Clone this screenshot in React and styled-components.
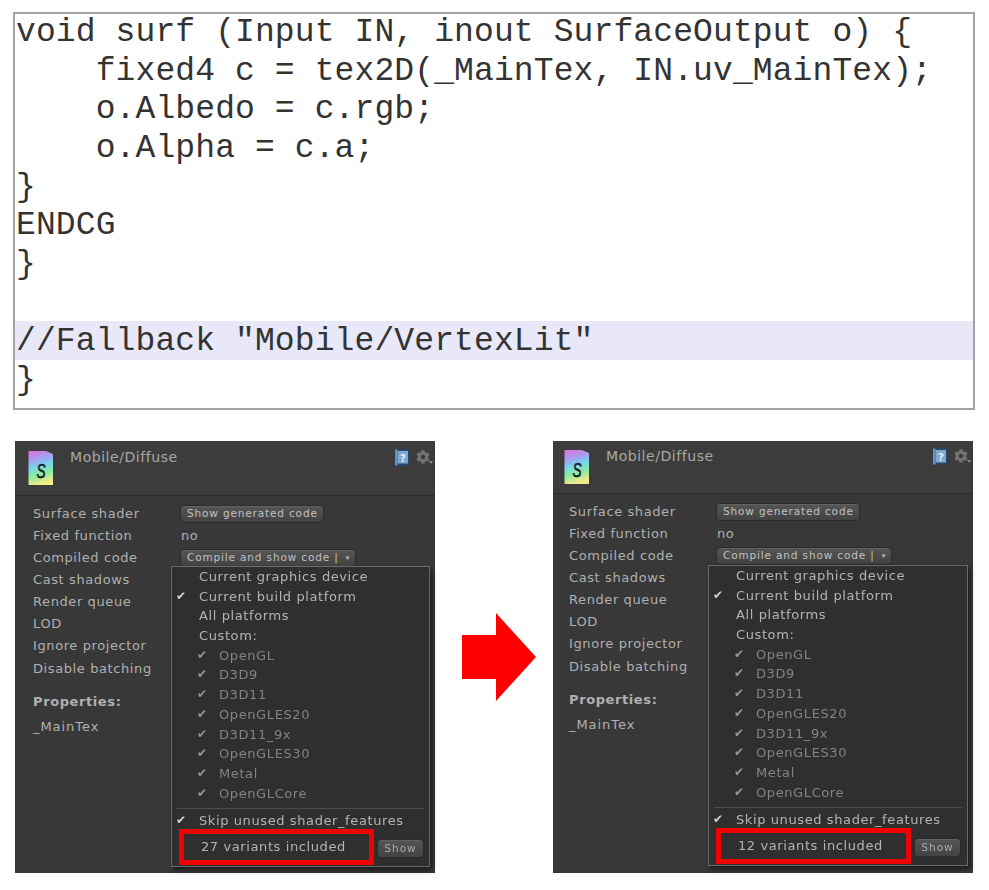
import styled, { createGlobalStyle } from 'styled-components';
import { FaCog } from 'react-icons/fa';

const GlobalStyle = createGlobalStyle`
    html, body {
        margin: 0;
        padding: 0;
        background: #fff;
    }
`;

const Page = styled.div`
    width: 989px;
    height: 890px;
    overflow: hidden;
    padding-top: 12px;
    box-sizing: border-box;
`;

const CodeBox = styled.div`
    width: 962px;
    height: 398px;
    margin-left: 13px;
    box-sizing: border-box;
    border: 2px solid #a3a3a3;
    overflow: hidden;
`;

const CodeLines = styled.div`
    margin-top: -2px;
    font-family: "Liberation Mono", monospace;
    font-size: 33px;
    letter-spacing: 0.11px;
    line-height: 38.65px;
    color: #333;
`;

const CodeLine = styled.div`
    box-sizing: border-box;
    height: 38.65px;
    padding: 2px 0 0 1px;
    white-space: pre;
    background: ${p => (p.$highlight ? '#e8e8f8' : 'transparent')};
`;

const Compare = styled.div`
    display: flex;
    align-items: flex-start;
    margin: 31px 0 0 15px;
`;

const ArrowWrap = styled.svg`
    flex: none;
    width: 74px;
    height: 88px;
    margin: 172px 17px 0 27px;
`;

const Panel = styled.div`
    position: relative;
    flex: none;
    width: 420px;
    height: 432px;
    background: #383838;
    font-family: "DejaVu Sans", sans-serif;
    color: #b0b0b0;
    filter: blur(0.35px);
`;

const Header = styled.div`
    display: flex;
    align-items: flex-start;
    box-sizing: border-box;
    height: ${p => (p.$compact ? 53 : 55)}px;
    padding: ${p => (p.$compact ? '8px 2px 0 11px' : '9px 2px 0 13px')};
    background: #3c3c3c;
    border-bottom: 1px solid #2b2b2b;
`;

const Title = styled.div`
    flex: 1;
    margin: -1px 0 0 16px;
    font-size: 14px;
    line-height: 16px;
    letter-spacing: 0.55px;
    color: #a8a8a8;
`;

const HeaderIcons = styled.div`
    display: flex;
    align-items: flex-start;
    gap: 6px;
    margin: -1px 0 0 0;
`;

const GearWrap = styled.div`
    display: flex;
    align-items: flex-end;
    width: 17px;
    height: 14px;
    margin-top: 1px;
    color: #727272;
`;

const GearCaret = styled.span`
    width: 0;
    height: 0;
    margin-left: -1px;
    border-left: 2px solid transparent;
    border-right: 2px solid transparent;
    border-top: 3px solid #8a8a8a;
`;

const Body = styled.div`
    padding: 6px 0 0 ${p => (p.$compact ? 16 : 18)}px;
`;

const Row = styled.div`
    display: flex;
    align-items: center;
    height: 22.15px;
    font-size: 13px;
    letter-spacing: 0.6px;
    white-space: nowrap;
`;

const RowLabel = styled.div`
    width: 147px;
    flex: none;
`;

const RowValue = styled.div`
    padding-left: 1px;
`;

const SectionLabel = styled(Row)`
    margin-top: 11px;
    font-weight: 700;
`;

const PropertyRow = styled(Row)`
    margin-top: 3px;
    letter-spacing: 0.95px;
`;

const SmallButton = styled.div`
    box-sizing: border-box;
    height: 18px;
    margin-top: 1px;
    padding: 0 5px 0 6px;
    border: 1px solid #2a2a2a;
    border-radius: 4px;
    background: linear-gradient(#555, #434343);
    box-shadow: inset 0 1px 0 #636363;
    color: #c0c0c0;
    font-family: "DejaVu Sans", sans-serif;
    font-size: 10.5px;
    line-height: 15px;
    letter-spacing: 0.85px;
    white-space: nowrap;
`;

const DropCaret = styled.span`
    font-size: 7px;
    vertical-align: 1px;
    margin-left: 3px;
`;

const Menu = styled.div`
    position: absolute;
    top: ${p => (p.$compact ? 124 : 125)}px;
    left: ${p => (p.$compact ? 155 : 156)}px;
    box-sizing: border-box;
    width: ${p => (p.$compact ? 260 : 259)}px;
    height: 301px;
    background: #2f2f2f;
    border: 1px solid #6a6a6a;
    box-shadow: 2px 3px 5px rgba(0, 0, 0, 0.55);
`;

const MenuItem = styled.div`
    position: relative;
    height: 19.7px;
    line-height: 19.7px;
    padding-left: ${p => (p.$nested ? 47 : 27)}px;
    font-size: 13px;
    letter-spacing: 0.6px;
    white-space: nowrap;
    color: ${p => (p.$nested ? '#838383' : '#b4b4b4')};
`;

const Check = styled.span`
    position: absolute;
    left: ${p => (p.$nested ? 25 : 4)}px;
    font-size: 12px;
    color: ${p => (p.$nested ? '#959595' : '#d0d0d0')};
`;

const Separator = styled.div`
    height: 1px;
    margin: 5px 5px 2px;
    background: #4b4b4b;
`;

const MenuFooter = styled.div`
    display: flex;
    align-items: center;
    gap: 3px;
    margin: -2px 5px 0 7px;
`;

const VariantBox = styled.div`
    box-sizing: border-box;
    width: 195px;
    height: 36px;
    padding-left: 17px;
    border: 5px solid #f00000;
    font-size: 13px;
    line-height: 26px;
    letter-spacing: 0.6px;
    color: #b4b4b4;
    white-space: nowrap;
`;

const ShowButton = styled(SmallButton)`
    width: 47px;
    height: 19px;
    margin-top: 3px;
    padding: 0;
    text-align: center;
    line-height: 16px;
    letter-spacing: 1px;
    color: #aaa;
`;

const codeLines = [
    'void surf (Input IN, inout SurfaceOutput o) {',
    '    fixed4 c = tex2D(_MainTex, IN.uv_MainTex);',
    '    o.Albedo = c.rgb;',
    '    o.Alpha = c.a;',
    '}',
    'ENDCG',
    '}',
    ' ',
    '//Fallback "Mobile/VertexLit"',
    '}',
];

const labels = [
    'Surface shader',
    'Fixed function',
    'Compiled code',
    'Cast shadows',
    'Render queue',
    'LOD',
    'Ignore projector',
    'Disable batching',
];

const platforms = ['OpenGL', 'D3D9', 'D3D11', 'OpenGLES20', 'D3D11_9x', 'OpenGLES30', 'Metal', 'OpenGLCore'];

function ShaderIcon({ id }) {
    return (
        <svg width="26" height="36" viewBox="0 0 26 36">
            <defs>
                <linearGradient id={id} x1="0.1" y1="0" x2="0.3" y2="1">
                    <stop offset="0" stopColor="#e070d8" />
                    <stop offset="0.28" stopColor="#a4a0f0" />
                    <stop offset="0.5" stopColor="#74d8ea" />
                    <stop offset="0.75" stopColor="#90ec9c" />
                    <stop offset="1" stopColor="#f2ea88" />
                </linearGradient>
            </defs>
            <path d="M0.5 1 H18 L25 4 V35 H0.5 Z" fill={`url(#${id})`} />
            <text transform="translate(13 28) scale(0.65 1)" textAnchor="middle" fontFamily="'Liberation Sans', sans-serif" fontStyle="italic" fontSize="21" stroke="#1c1c1c" strokeWidth="0.6" fill="#1c1c1c">S</text>
        </svg>
    );
}

function HelpIcon() {
    return (
        <svg width="16" height="17" viewBox="0 0 16 17">
            <rect x="1" y="0.5" width="14" height="16" rx="1" fill="#24496f" />
            <rect x="3.5" y="2" width="10.5" height="12.5" fill="#7fa8cf" />
            <rect x="1" y="0.5" width="2.5" height="16" fill="#5c94c4" />
            <text x="8.8" y="12.5" textAnchor="middle" fontFamily="'DejaVu Sans', sans-serif" fontSize="10" fontWeight="700" fill="#e4edf5">?</text>
        </svg>
    );
}

function ShaderPanel({ id, compact, variants }) {
    return (
        <Panel>
            <Header $compact={compact}>
                <ShaderIcon id={id} />
                <Title>Mobile/Diffuse</Title>
                <HeaderIcons>
                    <HelpIcon />
                    <GearWrap>
                        <FaCog size={14} />
                        <GearCaret />
                    </GearWrap>
                </HeaderIcons>
            </Header>
            <Body $compact={compact}>
                {labels.map((label, i) => (
                    <Row key={label}>
                        <RowLabel>{label}</RowLabel>
                        {i === 0 && <SmallButton>Show generated code</SmallButton>}
                        {i === 1 && <RowValue>no</RowValue>}
                        {i === 2 && <SmallButton>Compile and show code | <DropCaret>▾</DropCaret></SmallButton>}
                    </Row>
                ))}
                <SectionLabel>Properties:</SectionLabel>
                <PropertyRow>_MainTex</PropertyRow>
            </Body>
            <Menu $compact={compact}>
                <MenuItem>Current graphics device</MenuItem>
                <MenuItem><Check>✔</Check>Current build platform</MenuItem>
                <MenuItem>All platforms</MenuItem>
                <MenuItem>Custom:</MenuItem>
                {platforms.map(name => (
                    <MenuItem key={name} $nested><Check $nested>✔</Check>{name}</MenuItem>
                ))}
                <Separator />
                <MenuItem><Check>✔</Check>Skip unused shader_features</MenuItem>
                <MenuFooter>
                    <VariantBox>{variants} variants included</VariantBox>
                    <ShowButton>Show</ShowButton>
                </MenuFooter>
            </Menu>
        </Panel>
    );
}

export default function App() {
    return (
        <Page>
            <GlobalStyle />
            <CodeBox>
                <CodeLines>
                    {codeLines.map((line, i) => (
                        <CodeLine key={i} $highlight={i === 8}>{line}</CodeLine>
                    ))}
                </CodeLines>
            </CodeBox>
            <Compare>
                <ShaderPanel id="shaderA" variants={27} />
                <ArrowWrap viewBox="0 0 74 88">
                    <polygon points="0,22 34,22 34,0 74,44 34,88 34,66 0,66" fill="#ff0000" />
                </ArrowWrap>
                <ShaderPanel id="shaderB" compact variants={12} />
            </Compare>
        </Page>
    );
}
